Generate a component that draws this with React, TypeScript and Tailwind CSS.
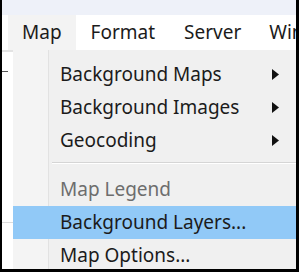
import React from 'react';

const font = { fontFamily: '"Noto Sans", "Open Sans", sans-serif' };

function Arrow() {
  return (
    <svg width="7" height="11" viewBox="0 0 7 11" className="block">
      <path d="M0 0 L7 5.5 L0 11 Z" fill="#111" />
    </svg>
  );
}

type Item = { label: string; sub?: boolean; disabled?: boolean; active?: boolean };

function MenuItem({ label, sub, disabled, active }: Item) {
  return (
    <div className={`flex h-[33px] items-center ${active ? 'bg-[#91c9f7]' : ''}`}>
      <div className="w-[47px] shrink-0" />
      <div
        className={`text-[19px] leading-[33px] whitespace-nowrap ${disabled ? 'text-[#6d6d6d]' : 'text-[#1b1b1b]'}`}
      >
        {label}
      </div>
      {sub && (
        <div className="ml-auto pr-[17px]">
          <Arrow />
        </div>
      )}
    </div>
  );
}

export default function App() {
  const top: Item[] = [
    { label: 'Background Maps', sub: true },
    { label: 'Background Images', sub: true },
    { label: 'Geocoding', sub: true },
  ];
  const bottom: Item[] = [
    { label: 'Map Legend', disabled: true },
    { label: 'Background Layers...', active: true },
    { label: 'Map Options...' },
  ];

  return (
    <div className="w-[300px] h-[275px] bg-white overflow-hidden" style={font}>
      <div className="w-[299px] h-[272px] border-l-2 border-r-[3px] border-b-[3px] border-black flex flex-col overflow-hidden">
        {/* title strip */}
        <div className="h-[15px] shrink-0 bg-[#eef1f9]" />

        {/* menu bar */}
        <div className="h-[35px] shrink-0 bg-white flex items-stretch pl-[6px] text-[19px] leading-[35px] text-[#1b1b1b] whitespace-nowrap">
          <div className="px-[14px] bg-[#f3f3f3]">Map</div>
          <div className="pl-[15px] pr-[14px]">Format</div>
          <div className="pl-[15px] pr-[14px]">Server</div>
          <div className="pl-[14px]">Window</div>
        </div>

        {/* window below + dropdown */}
        <div className="flex flex-1 min-h-0">
          <div className="w-[11px] shrink-0 bg-white flex flex-col">
            <div className="h-[2px] bg-[#e3e3e3]" />
            <div className="mt-[19px] h-px w-[6px] bg-[#555]" />
            <div className="mt-[150px] h-px bg-[#dcdcdc]" />
          </div>

          <div className="flex-1 relative bg-[#f0f0f0] pt-[8px]">
            {/* icon gutter */}
            <div className="absolute left-0 top-0 bottom-0 w-[36px] bg-[#f4f4f4] border-r border-[#e2e2e2]" />
            <div className="relative">
              {top.map((it) => (
                <MenuItem key={it.label} {...it} />
              ))}
              <div className="h-[16px] flex flex-col">
                <div className="h-[5px]" />
                <div className="ml-[39px] h-px bg-[#d5d5d5]" />
                <div className="ml-[39px] h-px bg-white" />
              </div>
              {bottom.map((it) => (
                <MenuItem key={it.label} {...it} />
              ))}
            </div>
          </div>
        </div>
      </div>
    </div>
  );
}
